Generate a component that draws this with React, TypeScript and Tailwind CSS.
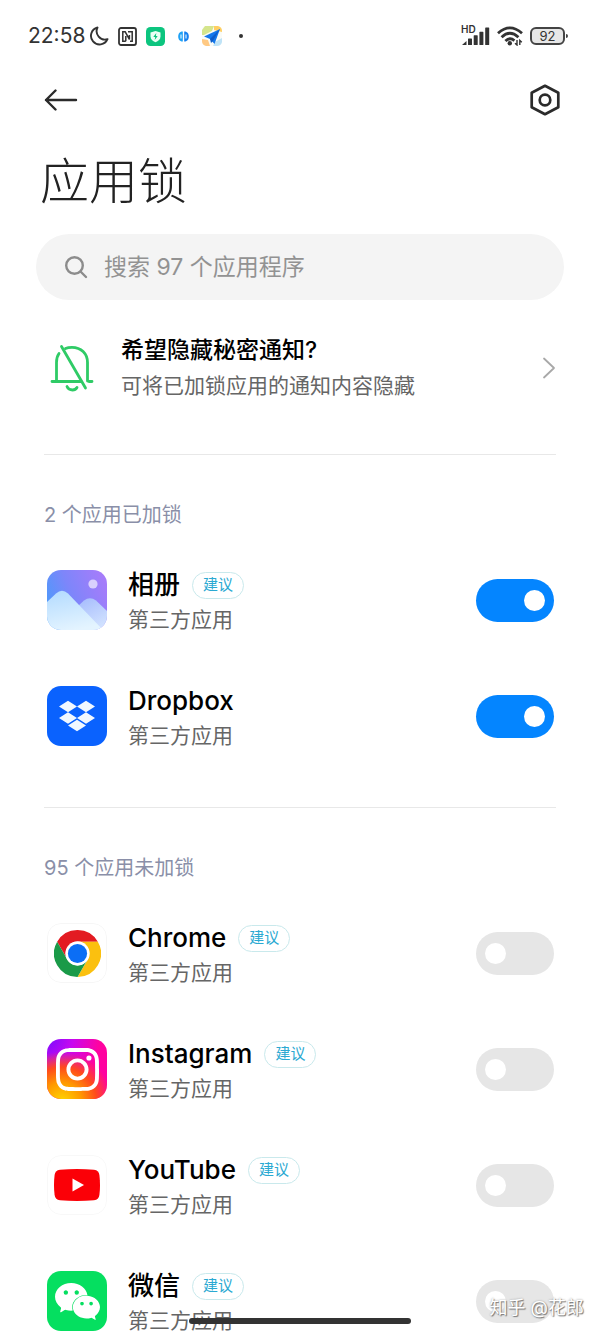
import { useId, useState } from "react";
import type { ReactNode } from "react";
import { SiDropbox, SiInstagram, SiWechat } from "react-icons/si";

type AppItem = {
  name: string;
  icon: ReactNode;
  suggested?: boolean;
  locked?: boolean;
};

function GalleryIcon() {
  return (
    <svg viewBox="0 0 60 60" className="size-full" aria-hidden="true">
      <defs>
        <linearGradient id="sky" x1="0" y1="0.7" x2="1" y2="0.3">
          <stop offset="0" stopColor="#4a9bfb" />
          <stop offset="0.45" stopColor="#7d86fa" />
          <stop offset="1" stopColor="#a57cfa" />
        </linearGradient>
        <linearGradient id="front" x1="0.2" y1="0" x2="0.5" y2="1">
          <stop offset="0" stopColor="#b5dcff" />
          <stop offset="1" stopColor="#e4f4ff" />
        </linearGradient>
        <linearGradient id="back" x1="0.3" y1="0" x2="0.8" y2="1">
          <stop offset="0" stopColor="#a9bffd" />
          <stop offset="1" stopColor="#d5e5ff" />
        </linearGradient>
      </defs>
      <rect width="60" height="60" fill="url(#sky)" />
      <circle cx="46" cy="14" r="4.6" fill="#d9d0fd" />
      <path d="M30 37L37 30.500Q43 26 49 30.500L60 41V60H30Z" fill="url(#back)" />
      <path d="M0 32L9 23.500Q15 18 21 23.500L56 60H0Z" fill="url(#front)" />
    </svg>
  );
}

function ChromeIcon() {
  const blade = "M24 12H44.785A24 24 0 0 0 3.215 12L13.608 30A12 12 0 0 1 24 12Z";
  return (
    <svg viewBox="0 0 48 48" className="size-[47px]" aria-hidden="true">
      <path d={blade} fill="#e31b22" />
      <path d={blade} fill="#fbc00f" transform="rotate(120 24 24)" />
      <path d={blade} fill="#1a9a48" transform="rotate(240 24 24)" />
      <circle cx="24" cy="24" r="12.4" fill="#fff" />
      <circle cx="24" cy="24" r="9.8" fill="#0b6ef5" />
    </svg>
  );
}

function YouTubeIcon() {
  return (
    <svg viewBox="0 0 46 32" className="w-[46px]" aria-hidden="true">
      <path
        d="M6 .8C17 -.2 29 -.2 40 .8 43.500 1.200 45 3 45.400 6 46.200 12.500 46.200 19.500 45.400 26 45 29 43.500 30.800 40 31.200 29 32.200 17 32.200 6 31.200 2.500 30.800 1 29 .6 26 -.2 19.500 -.2 12.500 .6 6 1 3 2.500 1.200 6 .8Z"
        fill="#fb0007"
      />
      <path d="M18.500 9.500L30 16L18.500 22.500Z" fill="#fff" />
    </svg>
  );
}

const lockedApps: AppItem[] = [
  { name: "相册", suggested: true, locked: true, icon: <GalleryIcon /> },
  {
    name: "Dropbox",
    locked: true,
    icon: (
      <div className="flex size-full items-center justify-center bg-[#0a62fe]">
        <SiDropbox className="size-9 text-[#f1f8ff]" />
      </div>
    ),
  },
];

const unlockedApps: AppItem[] = [
  {
    name: "Chrome",
    suggested: true,
    icon: (
      <div className="flex size-full items-center justify-center rounded-[14px] border border-[#f6f6f6] bg-white">
        <ChromeIcon />
      </div>
    ),
  },
  {
    name: "Instagram",
    suggested: true,
    icon: (
      <div className="flex size-full items-center justify-center bg-[radial-gradient(circle_at_25%_105%,#ffd800_0%,#ff9a00_25%,#ff4a1c_45%,transparent_65%),radial-gradient(circle_at_0%_0%,#7a0cff_0%,#c808f0_30%,#ff02a0_62%)]">
        <SiInstagram className="size-[43px] text-white" />
      </div>
    ),
  },
  {
    name: "YouTube",
    suggested: true,
    icon: (
      <div className="flex size-full items-center justify-center rounded-[14px] border border-[#f8f8f8] bg-white">
        <YouTubeIcon />
      </div>
    ),
  },
  {
    name: "微信",
    suggested: true,
    icon: (
      <div className="flex size-full items-center justify-center bg-[#05df60]">
        <SiWechat className="size-[45px] text-white" />
      </div>
    ),
  },
];

function StatusBar() {
  return (
    <div className="flex h-[72px] shrink-0 items-center justify-between pr-8 pl-7 text-[#333]">
      <div className="flex items-center gap-[9px]">
        <div className="flex items-center gap-1">
          <span className="text-[21px] leading-7">22:58</span>
          <svg viewBox="0 0 20 20" className="size-5" fill="none" stroke="currentColor" strokeWidth="1.9" strokeLinejoin="round" aria-hidden="true">
            <path d="M8.500 1.500A8.600 8.600 0 1 0 18.500 13.200A8.400 8.400 0 0 1 8.500 1.500Z" />
          </svg>
        </div>
        <svg viewBox="0 0 19 19" className="size-[19px]" fill="none" stroke="currentColor" strokeWidth="1.8" aria-hidden="true">
          <rect x="1" y="1" width="17" height="17" rx="2" />
          <path d="M7.800 14.200H4.800V4.800H7.200L11.400 12.400V8M7.800 14.200V9M10 4.800H14.200V14.200H12" strokeWidth="1.500" />
        </svg>
        <svg viewBox="0 0 19 19" className="size-[19px]" aria-hidden="true">
          <rect width="19" height="19" rx="4.500" fill="#0cc57f" />
          <path d="M9.500 4L14.500 5.500V9.500C14.500 12.500 12.300 14.200 9.500 15.200C6.700 14.200 4.500 12.500 4.500 9.500V5.500Z" fill="#eafff5" />
          <path d="M10.300 6L7.300 10H9.200L8.700 13L11.700 9H9.900Z" fill="#0cc57f" />
        </svg>
        <svg viewBox="0 0 19 19" className="size-[19px]" aria-hidden="true">
          <path d="M8.800 4.500V14.500C5.500 14.600 4.200 12 4.200 9.500S5.500 4.400 8.800 4.500Z" fill="#1ea1f5" />
          <path d="M10.200 4.500V14.500C13.500 14.600 14.800 12 14.800 9.500S13.500 4.400 10.200 4.500Z" fill="#1680f0" />
          <path d="M7 7.500V11.500M12 7.500V11.500" stroke="#d5f1ff" strokeWidth="1.200" />
        </svg>
        <svg viewBox="0 0 20 20" className="size-5" aria-hidden="true">
          <rect width="20" height="20" rx="4.500" fill="#f9fbf7" />
          <path d="M3 0H12L10 5L2 9H0V4Z" fill="#d5e58c" />
          <path d="M12 0H16Q20 1 20 5V6L12 4Z" fill="#ffcf63" />
          <path d="M0 13L6 14L8 20H4Q0 19 0 15Z" fill="#ffc983" />
          <path d="M13 16L20 12V16Q19 20 15 20H11Z" fill="#bfe3f7" />
          <path d="M18 3L2 10.500L8 13L12.500 18Z" fill="#1478ec" />
          <path d="M18 3L8 13L9 17L10.500 15.500Z" fill="#0d5cc8" />
        </svg>
        <span className="ml-2 size-1 rounded-full bg-[#333]" />
      </div>

      <div className="flex items-center gap-[7px]">
        <div className="relative">
          <span className="absolute -top-0.5 left-0 text-[10px] leading-[10px] font-semibold">HD</span>
          <svg viewBox="0 0 29 20" className="h-5 w-[29px]" fill="currentColor" aria-hidden="true">
            <path d="M1 19L5.500 15V19Z" />
            <rect x="7" y="12.500" width="4" height="6.500" rx=".6" />
            <rect x="12.700" y="9.200" width="4" height="9.800" rx=".6" />
            <rect x="18.400" y="5.800" width="4" height="13.200" rx=".6" />
            <rect x="24.200" y="1.500" width="4" height="17.500" rx=".6" />
          </svg>
        </div>
        <svg viewBox="0 0 26 20" className="h-5 w-[26px]" fill="none" stroke="currentColor" strokeWidth="2.800" aria-hidden="true">
          <path d="M1 7.200Q12.800 -3.400 25 7.200" />
          <path d="M4.600 11.200Q12.800 3.400 21.400 11.200" />
          <path d="M8.400 15Q12.800 10.600 17.400 14.600" />
          <circle cx="12.800" cy="17.200" r="2.200" fill="currentColor" stroke="none" />
          <path d="M20 14V19L18 17.200M22.800 19V14.400L24.800 16.200" strokeWidth="1.400" />
        </svg>
        <div className="flex items-center gap-px">
          <div className="flex h-[18px] w-[35px] items-center justify-center rounded-md border-2 border-[#444] bg-[#e7e7e7] text-[13px] leading-4">
            92
          </div>
          <span className="h-1 w-0.5 rounded-r bg-[#444]" />
        </div>
      </div>
    </div>
  );
}

function AppRow({ app }: { app: AppItem }) {
  const id = useId();
  const [locked, setLocked] = useState(Boolean(app.locked));

  return (
    <li className="flex h-[116px] items-center pr-[46px] pl-[47px]">
      <div className="size-[60px] shrink-0 overflow-hidden rounded-[14px]">{app.icon}</div>
      <div className="ml-[21px] min-w-0 flex-1 pt-1">
        <div className="flex h-9 items-center gap-3">
          <label htmlFor={id} className="text-[26px] leading-9 font-medium text-black">
            {app.name}
          </label>
          {app.suggested && (
            <span className="flex h-[27px] items-center rounded-full border border-[#c9e9ec] px-2.5 text-[15px] leading-5 text-[#2aa9d2]">
              建议
            </span>
          )}
        </div>
        <p className="text-[21px] leading-[34px] text-[#666]">第三方应用</p>
      </div>
      <input
        id={id}
        type="checkbox"
        checked={locked}
        onChange={(e) => setLocked(e.target.checked)}
        className="flex h-[43px] w-[78px] shrink-0 cursor-pointer appearance-none items-center rounded-full bg-[#e6e6e6] px-[9px] before:size-[21px] before:rounded-full before:bg-white checked:justify-end checked:bg-[#0485ff]"
      />
    </li>
  );
}

function AppSection({ title, apps }: { title: string; apps: AppItem[] }) {
  return (
    <section>
      <hr className="mx-11 border-[#e8e8e8]" />
      <h2 className="px-11 pt-[45px] pb-3 text-[20px] leading-[30px] text-[#8a8fa8]">{title}</h2>
      <ul>
        {apps.map((app) => (
          <AppRow key={app.name} app={app} />
        ))}
      </ul>
    </section>
  );
}

export default function App() {
  return (
    <div className="relative flex h-screen flex-col overflow-hidden bg-white font-['Inter','Noto_Sans_CJK_SC',sans-serif]">
      <StatusBar />

      <header className="flex h-14 shrink-0 items-center justify-between pr-10 pl-11 text-[#2b2b2b]">
        <button type="button" aria-label="返回">
          <svg viewBox="0 0 34 22" className="h-[22px] w-[34px]" fill="none" stroke="currentColor" strokeWidth="2.400" strokeLinecap="round" strokeLinejoin="round" aria-hidden="true">
            <path d="M32 11H2M11.500 1.500L2 11L11.500 20.500" />
          </svg>
        </button>
        <button type="button" aria-label="设置">
          <svg viewBox="0 0 30 32" className="h-8 w-[30px]" fill="none" stroke="currentColor" strokeWidth="2.700" strokeLinejoin="round" aria-hidden="true">
            <path d="M15 1.800L28.300 8.800V23.200L15 30.200L1.700 23.200V8.800Z" />
            <circle cx="15" cy="16" r="5.300" />
          </svg>
        </button>
      </header>

      <main className="min-h-0 flex-1 overflow-y-auto [scrollbar-width:none]">
        <h1 className="px-10 pt-6 text-[49px] leading-[60px] font-light text-[#222]">应用锁</h1>

        <label className="mx-9 mt-[22px] flex h-[66px] items-center gap-4 rounded-full bg-[#f4f4f4] pr-6 pl-7">
          <svg viewBox="0 0 24 24" className="size-6 shrink-0" fill="none" stroke="#8c8c8c" strokeWidth="2.400" strokeLinecap="round" aria-hidden="true">
            <circle cx="10.500" cy="10.500" r="8.300" />
            <path d="M16.500 16.500L22 22" />
          </svg>
          <input
            type="search"
            aria-label="搜索应用程序"
            placeholder="搜索 97 个应用程序"
            className="min-w-0 flex-1 bg-transparent text-[23px] leading-8 outline-none placeholder:text-[#929292]"
          />
        </label>

        <a href="#notifications" className="mt-8 mb-[50px] flex items-center pr-11 pl-[50px]">
          <svg viewBox="0 0 44 48" className="h-12 w-11 shrink-0" fill="none" stroke="#2fcb66" strokeWidth="2.800" strokeLinecap="round" aria-hidden="true">
            <path d="M2 37.500H31M39 37.500H42" />
            <path d="M6.500 37V18.500Q6.500 13 9 9.500" />
            <path d="M15.500 4.600Q18 3.300 22 3.300C31 3.300 37.500 9.500 37.500 18.500V37" />
            <path d="M11.500 2.500L35.500 44" />
            <path d="M17 42.500Q18.500 46 22.500 46Q25.500 46 27 43.500" />
          </svg>
          <div className="ml-[27px] min-w-0 flex-1">
            <p className="text-[23px] leading-9 font-medium text-black">希望隐藏秘密通知?</p>
            <p className="text-[21px] leading-9 text-[#666]">可将已加锁应用的通知内容隐藏</p>
          </div>
          <svg viewBox="0 0 14 22" className="h-[22px] w-3.5 shrink-0" fill="none" stroke="#a8a8a8" strokeWidth="1.800" strokeLinecap="round" strokeLinejoin="round" aria-hidden="true">
            <path d="M2 1.500L12 11L2 20.500" />
          </svg>
        </a>

        <AppSection title="2 个应用已加锁" apps={lockedApps} />
        <div className="h-[33px]" />
        <AppSection title="95 个应用未加锁" apps={unlockedApps} />
      </main>

      <div className="absolute bottom-[9px] left-1/2 h-1.5 w-[222px] -translate-x-1/2 rounded-full bg-[#333]" />
      <p className="absolute right-4 bottom-[11px] text-[18px] leading-7 text-white [text-shadow:1px_1px_1px_#777,0_0_2px_#999]">
        知乎 @花郎
      </p>
    </div>
  );
}
